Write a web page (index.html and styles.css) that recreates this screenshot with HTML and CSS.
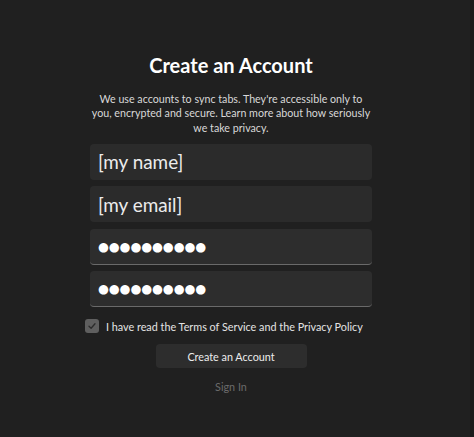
FILE: index.html
```html
<!DOCTYPE html>
<html>
<head>
<meta charset="utf-8">
<link rel="stylesheet" href="styles.css">
</head>
<body>
<div class="page">
  <main class="form">
    <h1 class="title">Create an Account</h1>
    <p class="intro">We use accounts to sync tabs. They're accessible only to you, encrypted and secure. Learn more about how seriously we take privacy.</p>
    <div class="fields">
      <div class="field">[my name]</div>
      <div class="field">[my email]</div>
      <div class="field pw"><span class="dots">●●●●●●●●●●</span></div>
      <div class="field pw"><span class="dots">●●●●●●●●●●</span></div>
    </div>
    <label class="agree">
      <span class="box"><svg width="10" height="10" viewBox="0 0 10 10"><path d="M2 5.2 L4.1 7.2 L8 2.8" fill="none" stroke="#2b2b2b" stroke-width="1.3" stroke-linecap="round" stroke-linejoin="round"/></svg></span>
      <span class="agree-text">I have read the Terms of Service and the Privacy Policy</span>
    </label>
    <button class="primary">Create an Account</button>
    <div class="signin">Sign In</div>
  </main>
  <div class="edge"></div>
</div>
</body>
</html>
```
FILE: styles.css
```css
html, body {
  margin: 0;
  padding: 0;
  background: #202020;
  height: 100%;
}
body {
  font-family: Lato, "Open Sans", sans-serif;
  color: #e6e6e6;
}
.page {
  display: flex;
  height: 437px;
  overflow: hidden;
}
.form {
  width: 470px;
  padding-right: 8px;
  box-sizing: border-box;
  display: flex;
  flex-direction: column;
  align-items: center;
  padding-top: 53px;
}
.edge {
  width: 4px;
  background: #1a1a1a;
}
.title {
  margin: 0;
  font-size: 20px;
  font-weight: 700;
  color: #ffffff;
  line-height: 24px;
}
.intro {
  margin: 15px 0 0;
  width: 284px;
  text-align: center;
  font-size: 10.7px;
  line-height: 14.3px;
  color: #d8d8d8;
}
.fields {
  margin-top: 9px;
  width: 282px;
  display: flex;
  flex-direction: column;
  gap: 6.4px;
}
.field {
  height: 36px;
  box-sizing: border-box;
  background: #2b2b2b;
  border-radius: 4px;
  padding-left: 8px;
  display: flex;
  align-items: center;
  font-size: 18.9px;
  color: #ececec;
}
.field.pw {
  background: #2d2d2d;
  border-bottom: 1.5px solid #6a6a6a;
}
.dots {
  font-family: "DejaVu Sans", sans-serif;
  font-size: 12.5px;
  letter-spacing: -0.1px;
  color: #ffffff;
}
.agree {
  margin-top: 12px;
  width: 292px;
  display: flex;
  align-items: center;
  gap: 7px;
}
.box {
  width: 14px;
  height: 14px;
  border-radius: 3px;
  background: #5f5f5f;
  display: flex;
  align-items: center;
  justify-content: center;
  flex: none;
}
.agree-text {
  font-size: 10.8px;
  color: #e4e4e4;
  white-space: nowrap;
}
.primary {
  margin-top: 11px;
  width: 151px;
  height: 24px;
  border: none;
  border-radius: 4px;
  background: #2d2d2d;
  color: #ececec;
  font-family: Lato, "Open Sans", sans-serif;
  font-size: 10.8px;
  padding: 0;
}
.signin {
  margin-top: 12px;
  font-size: 10.8px;
  color: #6b6b6b;
}
```
